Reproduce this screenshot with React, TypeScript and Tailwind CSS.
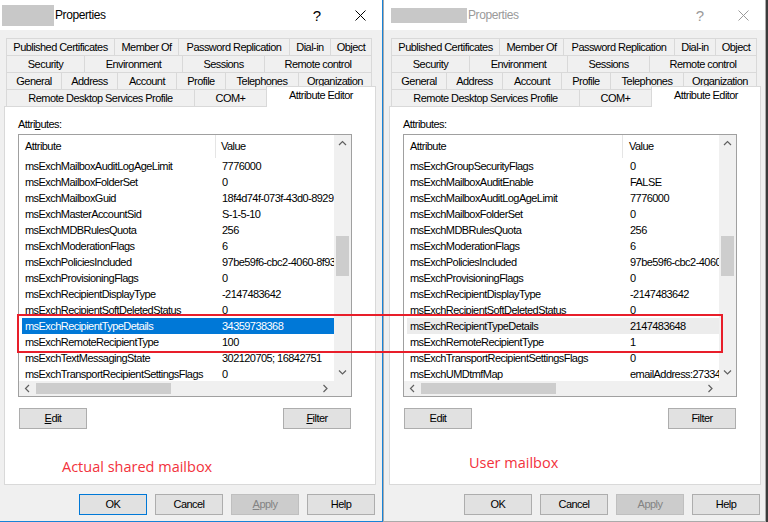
import React from "react";

type Row = [string, string];

const LEFT_ROWS: Row[] = [
  ["msExchMailboxAuditLogAgeLimit", "7776000"],
  ["msExchMailboxFolderSet", "0"],
  ["msExchMailboxGuid", "18f4d74f-073f-43d0-8929"],
  ["msExchMasterAccountSid", "S-1-5-10"],
  ["msExchMDBRulesQuota", "256"],
  ["msExchModerationFlags", "6"],
  ["msExchPoliciesIncluded", "97be59f6-cbc2-4060-8f93"],
  ["msExchProvisioningFlags", "0"],
  ["msExchRecipientDisplayType", "-2147483642"],
  ["msExchRecipientSoftDeletedStatus", "0"],
  ["msExchRecipientTypeDetails", "34359738368"],
  ["msExchRemoteRecipientType", "100"],
  ["msExchTextMessagingState", "302120705; 16842751"],
  ["msExchTransportRecipientSettingsFlags", "0"],
];

const RIGHT_ROWS: Row[] = [
  ["msExchGroupSecurityFlags", "0"],
  ["msExchMailboxAuditEnable", "FALSE"],
  ["msExchMailboxAuditLogAgeLimit", "7776000"],
  ["msExchMailboxFolderSet", "0"],
  ["msExchMDBRulesQuota", "256"],
  ["msExchModerationFlags", "6"],
  ["msExchPoliciesIncluded", "97be59f6-cbc2-4060"],
  ["msExchProvisioningFlags", "0"],
  ["msExchRecipientDisplayType", "-2147483642"],
  ["msExchRecipientSoftDeletedStatus", "0"],
  ["msExchRecipientTypeDetails", "2147483648"],
  ["msExchRemoteRecipientType", "1"],
  ["msExchTransportRecipientSettingsFlags", "0"],
  ["msExchUMDtmfMap", "emailAddress:27334"],
];

// tab strip, back rows first; widths read off the screenshot
const TAB_ROWS: [string, string][][] = [
  [
    ["Published Certificates", "w-[108px]"],
    ["Member Of", "w-[64px]"],
    ["Password Replication", "w-[111px]"],
    ["Dial-in", "w-[41px]"],
    ["Object", "w-[42px]"],
  ],
  [
    ["Security", "w-[78px]"],
    ["Environment", "w-[98px]"],
    ["Sessions", "w-[82px]"],
    ["Remote control", "w-[108px]"],
  ],
  [
    ["General", "w-[55px]"],
    ["Address", "w-[56px]"],
    ["Account", "w-[59px]"],
    ["Profile", "w-[49px]"],
    ["Telephones", "w-[73px]"],
    ["Organization", "w-[74px]"],
  ],
];

const ui = "font-['Liberation_Sans',Arial,sans-serif] text-[11px] leading-[13px] tracking-[-0.55px]";

function Chevron({ dir }: { dir: "up" | "down" | "left" | "right" }) {
  const pts = {
    up: "1,5 4.5,1.5 8,5",
    down: "1,1.5 4.5,5 8,1.5",
    left: "5,1 1.5,4.5 5,8",
    right: "1.5,1 5,4.5 1.5,8",
  }[dir];
  const vertical = dir === "up" || dir === "down";
  return (
    <svg width={vertical ? 9 : 7} height={vertical ? 7 : 9} viewBox={vertical ? "0 0 9 7" : "0 0 7 9"}>
      <polyline points={pts} fill="none" stroke="#606060" strokeWidth="1.2" />
    </svg>
  );
}

function Btn({
  label,
  hot,
  showHot,
  kind = "normal",
}: {
  label: string;
  hot?: number;
  showHot?: boolean;
  kind?: "normal" | "default" | "disabled";
}) {
  const cls =
    kind === "default"
      ? "border-[#0078d7] bg-[#e1e1e1] text-black"
      : kind === "disabled"
      ? "border-[#bfbfbf] bg-[#cccccc] text-[#838383]"
      : "border-[#adadad] bg-[#e1e1e1] text-black";
  const text =
    hot !== undefined && showHot ? (
      <>
        {label.slice(0, hot)}
        <span className="underline underline-offset-1">{label[hot]}</span>
        {label.slice(hot + 1)}
      </>
    ) : (
      label
    );
  return (
    <div className={`flex h-[21px] w-[68px] items-center justify-center border ${cls}`}>{text}</div>
  );
}

function AttrList({
  rows,
  active,
  attrHead,
  attrCell,
  valueHead,
}: {
  rows: Row[];
  active: boolean;
  attrHead: string;
  attrCell: string;
  valueHead: string;
}) {
  return (
    <div className="flex h-[263px] w-[334px] flex-col border border-[#a0a0a0] bg-white">
      <div className="flex h-[246px]">
        <div className="w-[315px] overflow-hidden">
          <div className="flex h-[23px]">
            <div className={`flex h-full items-center border-r border-[#e5e5e5] ${attrHead}`}>Attribute</div>
            <div className={`flex h-full items-center ${valueHead}`}>Value</div>
          </div>
          {rows.map(([name, value], i) => {
            const sel = i === 10;
            const bg = sel ? (active ? "bg-[#0078d7] text-white" : "bg-[#ececec] text-black") : "text-black";
            return (
              <div key={name} className={`ml-[3px] flex h-[16px] w-[312px] items-center whitespace-nowrap ${bg}`}>
                <div className={`shrink-0 pl-[3px] ${attrCell}`}>{name}</div>
                <div className="pl-[6px]">{value}</div>
              </div>
            );
          })}
        </div>
        <div className="flex w-[17px] flex-col bg-[#f0f0f0]">
          <div className="flex h-[17px] items-center justify-center">
            <Chevron dir="up" />
          </div>
          <div className="flex-1">
            <div className="mx-[2px] mt-[84px] h-[40px] bg-[#cdcdcd]" />
          </div>
          <div className="flex h-[17px] items-center justify-center">
            <Chevron dir="down" />
          </div>
        </div>
      </div>
      <div className="flex h-[15px] bg-[#f0f0f0]">
        <div className="flex w-[17px] items-center justify-center">
          <Chevron dir="left" />
        </div>
        <div className="flex flex-1 items-center">
          <div className="h-[11px] w-[135px] bg-[#cdcdcd]" />
        </div>
        <div className="flex w-[17px] items-center justify-center">
          <Chevron dir="right" />
        </div>
        <div className="w-[17px]" />
      </div>
    </div>
  );
}

function Dialog({
  active,
  rows,
  frame,
  redact,
  caption,
  captionPos,
  attrHead,
  attrCell,
  valueHead,
}: {
  active: boolean;
  rows: Row[];
  frame: string;
  redact: string;
  caption: string;
  captionPos: string;
  attrHead: string;
  attrCell: string;
  valueHead: string;
}) {
  const tabBase = "flex h-[17px] items-center justify-center border-t border-l border-[#d9d9d9]";
  return (
    <div className={`flex shrink-0 flex-col bg-[#f0f0f0] ${frame} ${ui}`}>
      {/* title bar */}
      <div className="flex h-[30px] shrink-0 items-center bg-white">
        <div className={`bg-[#c8c8c8] ${redact}`} />
        <span className={`text-[12px] tracking-[-0.4px] ${active ? "text-black" : "text-[#9a9a9a]"}`}>
          Properties
        </span>
        <span
          className={`ml-auto text-[15px] leading-none tracking-normal ${active ? "text-black" : "text-[#9a9a9a]"}`}
        >
          ?
        </span>
        <svg className="ml-[34px] mr-[16px]" width="11" height="11" viewBox="0 0 11 11">
          <path d="M0.5 0.5 L10.5 10.5 M10.5 0.5 L0.5 10.5" stroke={active ? "#000" : "#9a9a9a"} strokeWidth="1" />
        </svg>
      </div>

      {/* tabs */}
      <div className="ml-[7px] mt-[8px]">
        {TAB_ROWS.map((row, r) => (
          <div key={r} className="flex">
            {row.map(([label, w], i) => (
              <div key={label} className={`${tabBase} ${w} ${i === row.length - 1 ? "border-r" : ""}`}>
                {label}
              </div>
            ))}
          </div>
        ))}
        <div className="flex h-[17px]">
          <div className={`${tabBase} w-[188px]`}>Remote Desktop Services Profile</div>
          <div className={`${tabBase} w-[72px]`}>COM+</div>
          <div className="relative z-10 -mt-[3px] flex h-[21px] w-[110px] justify-center border-x border-t border-[#d9d9d9] bg-white pt-[2px]">
            Attribute Editor
          </div>
        </div>
      </div>

      {/* page */}
      <div className="ml-[5px] flex h-[379px] w-[372px] flex-col border border-[#d9d9d9] bg-white px-[13px] pt-[11px]">
        <div>
          Attri{active ? <span className="underline underline-offset-1">b</span> : "b"}utes:
        </div>
        <div className="mt-[3px]">
          <AttrList rows={rows} active={active} attrHead={attrHead} attrCell={attrCell} valueHead={valueHead} />
        </div>
        <div className="ml-[1px] mt-[11px] flex w-[332px] justify-between">
          <div className="h-[20px]">
            <Btn label="Edit" hot={0} showHot={active} />
          </div>
          <Btn label="Filter" hot={0} showHot={active} />
        </div>
        <div
          className={`font-['Open_Sans',sans-serif] text-[14.5px] leading-[20px] tracking-normal text-[#f2323c] ${captionPos}`}
        >
          {caption}
        </div>
      </div>

      {/* dialog buttons */}
      <div className="ml-[80px] mt-[9px] flex gap-[8px]">
        <Btn label="OK" kind={active ? "default" : "normal"} />
        <Btn label="Cancel" />
        <Btn label="Apply" hot={0} showHot={active} kind="disabled" />
        <Btn label="Help" />
      </div>
    </div>
  );
}

export default function App() {
  return (
    <div className="relative flex h-[522px] w-[768px] overflow-hidden bg-[#3b3b3b]">
      <Dialog
        active
        rows={LEFT_ROWS}
        frame="-ml-[1px] h-[522px] w-[384px] border-r border-b border-[#1883d7]"
        redact="ml-[3px] mr-[1px] h-[21px] w-[52px]"
        caption="Actual shared mailbox"
        captionPos="ml-[44px] mt-[28px]"
        attrHead="w-[197px] pl-[6px]"
        attrCell="w-[194px]"
        valueHead="pl-[5px]"
      />
      <Dialog
        active={false}
        rows={RIGHT_ROWS}
        frame="h-[522px] w-[383px] border-x border-b border-[#aaaaaa]"
        redact="ml-[7px] mr-[1px] h-[15px] w-[76px]"
        caption="User mailbox"
        captionPos="ml-[66px] mt-[24px]"
        attrHead="w-[219px] pl-[6px]"
        attrCell="w-[217px]"
        valueHead="pl-[6px]"
      />
      {/* red highlight drawn over both dialogs */}
      <div className="pointer-events-none absolute left-[17px] top-[314px] h-[39px] w-[706px] border-2 border-[#e81e2a]" />
    </div>
  );
}
